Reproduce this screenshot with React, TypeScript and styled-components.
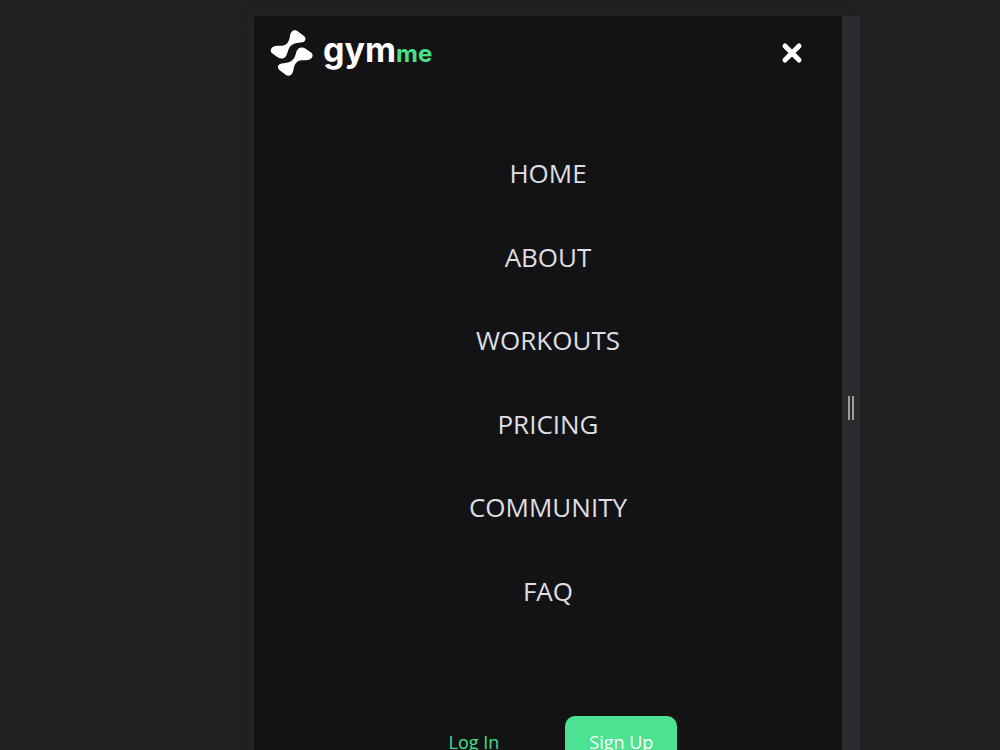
import React from "react";
import styled, { createGlobalStyle } from "styled-components";

const GlobalStyle = createGlobalStyle`
  *, *::before, *::after { box-sizing: border-box; }
  body {
    margin: 0;
    background: #212123;
    font-family: "Open Sans", "Noto Sans", sans-serif;
    overflow: hidden;
  }
`;

const Stage = styled.div`
  display: grid;
  grid-template-columns: 254fr minmax(320px, 588px) 18px 140fr;
  height: 100vh;
  padding-top: 16px;
  overflow: hidden;
`;

const Device = styled.div`
  grid-column: 2;
  background: #131315;
  box-shadow: 0 0 14px rgba(60, 60, 62, 0.25);
`;

const Header = styled.header`
  display: flex;
  align-items: center;
  justify-content: space-between;
  height: 74px;
  padding: 0 38px 0 16px;
`;

const Brand = styled.a`
  display: flex;
  align-items: center;
  gap: 10px;
  color: #fff;
  text-decoration: none;
`;

const Mark = styled.svg`
  width: 43px;
  height: 46px;
`;

const Wordmark = styled.span`
  font: 700 34px/40px Inter, sans-serif;
  padding-bottom: 2px;
`;

const Accent = styled.span`
  color: #48e08b;
  font-size: 24px;
`;

const CloseButton = styled.button`
  display: flex;
  padding: 0;
  border: 0;
  background: none;
  color: #fff;
  cursor: pointer;
`;

const Menu = styled.ul`
  display: flex;
  flex-direction: column;
  align-items: center;
  justify-content: space-between;
  height: 458px;
  margin: 63px 0 105px;
  padding: 0;
  list-style: none;
`;

const MenuLink = styled.a`
  display: block;
  color: #dedee4;
  font-size: 26px;
  line-height: 40px;
  text-decoration: none;
`;

const Actions = styled.div`
  display: flex;
  align-items: center;
  justify-content: center;
  gap: 42px;
  padding-left: 6px;
`;

const ActionButton = styled.button<{ $filled?: boolean }>`
  height: 52px;
  padding: 0 24px;
  border: 0;
  border-radius: 10px;
  background: ${(p) => (p.$filled ? "#4be391" : "transparent")};
  color: ${(p) => (p.$filled ? "#fff" : "#48e08b")};
  font-family: inherit;
  font-size: 18px;
  cursor: pointer;
`;

const ResizeHandle = styled.div`
  display: flex;
  align-items: center;
  justify-content: center;
  gap: 2px;
  height: 784px;
  background: #2a2b2e;
`;

const Grip = styled.span`
  width: 2px;
  height: 24px;
  background: #9d9d9b;
`;

const items = ["HOME", "ABOUT", "WORKOUTS", "PRICING", "COMMUNITY", "FAQ"];

const lobe =
  "M64 28C66 10 74 2 86 7L108 24C114 30 112 40 102 42C88 44 72 44 63 58C57 67 58 79 51 86C45 92 36 92 28 87L10 74C4 67 8 57 18 54C30 51 44 55 53 48C60 42 62 36 64 28Z";

export default function App() {
  return (
    <>
      <GlobalStyle />
      <Stage>
        <Device>
          <Header>
            <Brand href="#home">
              <Mark viewBox="5 5 129 138" fill="#fff" aria-hidden="true">
                <path d={lobe} />
                <path d={lobe} transform="rotate(180 70 74)" />
              </Mark>
              <Wordmark>
                gym<Accent>me</Accent>
              </Wordmark>
            </Brand>
            <CloseButton aria-label="Close menu">
              <svg width="24" height="24" viewBox="0 0 24 24" fill="none" stroke="currentColor" strokeWidth="5" strokeLinecap="round" aria-hidden="true">
                <path d="M5 5L19 19M19 5L5 19" />
              </svg>
            </CloseButton>
          </Header>
          <nav>
            <Menu>
              {items.map((item) => (
                <li key={item}>
                  <MenuLink href={`#${item.toLowerCase()}`}>{item}</MenuLink>
                </li>
              ))}
            </Menu>
          </nav>
          <Actions>
            <ActionButton>Log In</ActionButton>
            <ActionButton $filled>Sign Up</ActionButton>
          </Actions>
        </Device>
        <ResizeHandle role="separator" aria-orientation="vertical">
          <Grip />
          <Grip />
        </ResizeHandle>
      </Stage>
    </>
  );
}
